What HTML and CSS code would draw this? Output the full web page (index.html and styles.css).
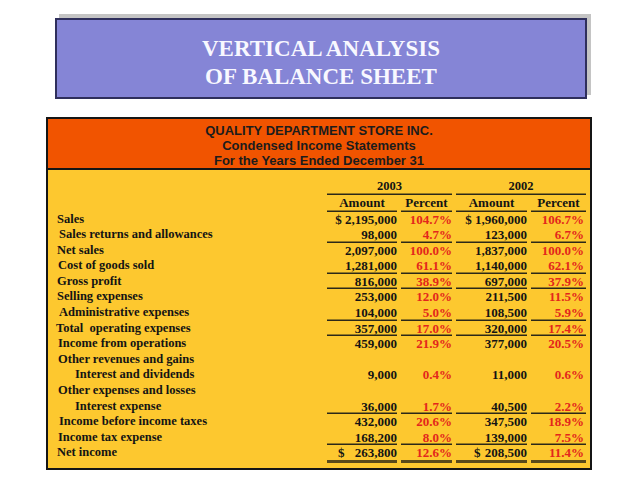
FILE: index.html
```html
<!DOCTYPE html>
<html>
<head>
<meta charset="utf-8">
<link rel="stylesheet" href="styles.css">
</head>
<body>
<div class="title">VERTICAL ANALYSIS<br>OF BALANCE SHEET</div>
<div class="panel">
  <div class="panel-head">
    <div>QUALITY DEPARTMENT STORE INC.</div>
    <div>Condensed Income Statements</div>
    <div>For the Years Ended December 31</div>
  </div>
  <div class="panel-body">
    <div class="row row-hd">
      <div></div>
      <div class="year ul">2003</div>
      <div class="year ul">2002</div>
    </div>
    <div class="row row-hd">
      <div></div>
      <div class="ch ul">Amount</div><div class="ch ul">Percent</div>
      <div class="ch ul">Amount</div><div class="ch ul">Percent</div>
    </div>
    <div class="row">
      <div class="lbl">Sales</div>
      <div class="amt">$ 2,195,000</div><div class="pct">104.7%</div>
      <div class="amt">$ 1,960,000</div><div class="pct">106.7%</div>
    </div>
    <div class="row">
      <div class="lbl in1">Sales returns and allowances</div>
      <div class="amt ul">98,000</div><div class="pct ul">4.7%</div>
      <div class="amt ul">123,000</div><div class="pct ul">6.7%</div>
    </div>
    <div class="row">
      <div class="lbl">Net sales</div>
      <div class="amt">2,097,000</div><div class="pct">100.0%</div>
      <div class="amt">1,837,000</div><div class="pct">100.0%</div>
    </div>
    <div class="row">
      <div class="lbl in0">Cost of goods sold</div>
      <div class="amt ul">1,281,000</div><div class="pct ul">61.1%</div>
      <div class="amt ul">1,140,000</div><div class="pct ul">62.1%</div>
    </div>
    <div class="row">
      <div class="lbl">Gross profit</div>
      <div class="amt ul">816,000</div><div class="pct ul">38.9%</div>
      <div class="amt ul">697,000</div><div class="pct ul">37.9%</div>
    </div>
    <div class="row">
      <div class="lbl">Selling expenses</div>
      <div class="amt">253,000</div><div class="pct">12.0%</div>
      <div class="amt">211,500</div><div class="pct">11.5%</div>
    </div>
    <div class="row">
      <div class="lbl in1">Administrative expenses</div>
      <div class="amt ul">104,000</div><div class="pct ul">5.0%</div>
      <div class="amt ul">108,500</div><div class="pct ul">5.9%</div>
    </div>
    <div class="row">
      <div class="lbl out">Total&nbsp; operating expenses</div>
      <div class="amt ul">357,000</div><div class="pct ul">17.0%</div>
      <div class="amt ul">320,000</div><div class="pct ul">17.4%</div>
    </div>
    <div class="row">
      <div class="lbl in0">Income from operations</div>
      <div class="amt">459,000</div><div class="pct">21.9%</div>
      <div class="amt">377,000</div><div class="pct">20.5%</div>
    </div>
    <div class="row">
      <div class="lbl in0">Other revenues and gains</div>
      <div></div><div></div><div></div><div></div>
    </div>
    <div class="row">
      <div class="lbl in2">Interest and dividends</div>
      <div class="amt">9,000</div><div class="pct">0.4%</div>
      <div class="amt">11,000</div><div class="pct">0.6%</div>
    </div>
    <div class="row">
      <div class="lbl in0">Other expenses and losses</div>
      <div></div><div></div><div></div><div></div>
    </div>
    <div class="row">
      <div class="lbl in2">Interest expense</div>
      <div class="amt ul">36,000</div><div class="pct ul">1.7%</div>
      <div class="amt ul">40,500</div><div class="pct ul">2.2%</div>
    </div>
    <div class="row">
      <div class="lbl in1">Income before income taxes</div>
      <div class="amt">432,000</div><div class="pct">20.6%</div>
      <div class="amt">347,500</div><div class="pct">18.9%</div>
    </div>
    <div class="row">
      <div class="lbl in0">Income tax expense</div>
      <div class="amt ul">168,200</div><div class="pct ul">8.0%</div>
      <div class="amt ul">139,000</div><div class="pct ul">7.5%</div>
    </div>
    <div class="row">
      <div class="lbl">Net income</div>
      <div class="amt dbl split s1"><span>$</span><span>263,800</span></div><div class="pct dbl">12.6%</div>
      <div class="amt dbl split s2"><span>$</span><span>208,500</span></div><div class="pct dbl">11.4%</div>
    </div>
  </div>
</div>
</body>
</html>
```

FILE: styles.css
```css
html, body {
  margin: 0;
  padding: 0;
  background: #ffffff;
}
body {
  width: 638px;
  height: 478px;
  overflow: hidden;
}
.title {
  box-sizing: border-box;
  margin: 18px 0 0 55px;
  width: 532px;
  height: 81px;
  padding-top: 15px;
  border: 2px solid #2f2f5c;
  background: #8585d6;
  box-shadow: 4px -4px 0 #c4c4c4;
  color: #f8f8ff;
  font-family: "Liberation Serif", "Times New Roman", serif;
  font-weight: bold;
  font-size: 23px;
  line-height: 27.5px;
  text-align: center;
}
.panel {
  box-sizing: border-box;
  margin: 18px 0 0 46px;
  width: 546px;
  height: 353px;
  border: 2px solid #151515;
  background: #fdc82f;
}
.panel-head {
  box-sizing: border-box;
  height: 51px;
  padding-top: 4px;
  background: #f15400;
  border-bottom: 2px solid #151515;
  color: #1c1c1c;
  font-family: "Liberation Sans", Arial, sans-serif;
  font-weight: bold;
  font-size: 13px;
  line-height: 15.2px;
  text-align: center;
}
.panel-body {
  padding-top: 7.5px;
  font-family: "Liberation Serif", "Times New Roman", serif;
  font-weight: bold;
  font-size: 12.5px;
  color: #141414;
}
.row {
  display: grid;
  grid-template-columns: 275px 70px 51px 71px 55px;
  column-gap: 4px;
  height: 15.6px;
  line-height: 15.6px;
  white-space: nowrap;
}
.row-hd {
  height: 17px;
  line-height: 16px;
}
.year {
  grid-column: span 2;
  text-align: center;
}
.ch {
  text-align: center;
  font-size: 13px;
}
.lbl {
  padding-left: 9px;
}
.lbl.in0 { padding-left: 10px; }
.lbl.in1 { padding-left: 11px; }
.lbl.in2 { padding-left: 27px; }
.lbl.out { padding-left: 8px; }
.amt {
  text-align: right;
  font-size: 13px;
}
.pct {
  text-align: right;
  font-size: 13px;
  color: #e3261c;
}
.row > .pct:last-child {
  padding-right: 2px;
}
.ul {
  box-shadow: inset 0 -1.5px 0 #2c2818;
}
.dbl {
  box-shadow: inset 0 -3px 0 #5a4a1a;
  height: 18px;
}
.split {
  display: flex;
  justify-content: space-between;
}
.s1 { padding-left: 11px; }
.s2 { padding-left: 18px; }
```
